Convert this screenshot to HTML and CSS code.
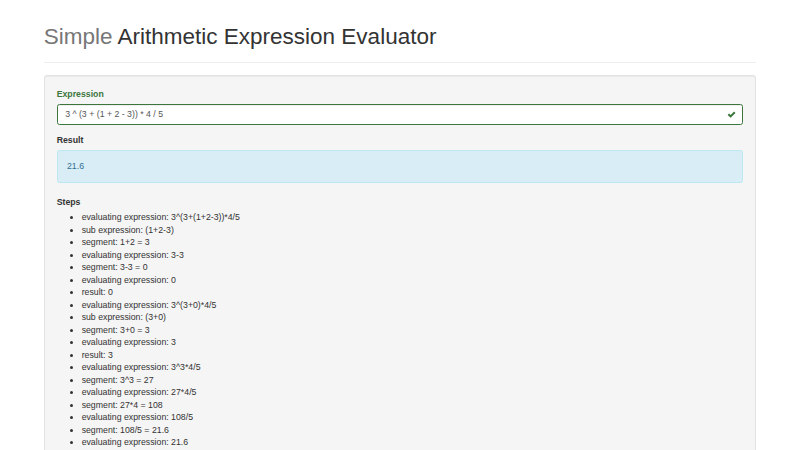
FILE: index.html
```html
<!DOCTYPE html>
<html lang="en">
<head>
    <meta charset="UTF-8">
    <meta name="viewport" content="width=device-width, initial-scale=1.0">
    <title>Simple Arithmetic Expression Evaluator</title>
    <link rel="stylesheet" href="styles.css">
</head>
<body>
    <div class="container">
        <div class="page-header">
            <h1><span class="text-muted">Simple</span> Arithmetic Expression Evaluator</h1>
        </div>

        <div class="well">
            <div class="form-group has-success">
                <label for="expression">Expression</label>
                <div class="input-wrap">
                    <input type="text" id="expression" class="form-control" value="3 ^ (3 + (1 + 2 - 3)) * 4 / 5">
                    <svg class="feedback" viewBox="0 0 14 14" width="9" height="9">
                        <path d="M1 7.6 L3.2 5.4 L5.6 7.8 L11 2.4 L13.2 4.6 L5.6 12.2 Z" fill="#3c763d"/>
                    </svg>
                </div>
            </div>

            <div class="form-group">
                <label>Result</label>
                <div class="alert alert-info">21.6</div>
            </div>

            <div class="form-group">
                <label>Steps</label>
                <ul class="steps">
                    <li>evaluating expression: 3^(3+(1+2-3))*4/5</li>
                    <li>sub expression: (1+2-3)</li>
                    <li>segment: 1+2 = 3</li>
                    <li>evaluating expression: 3-3</li>
                    <li>segment: 3-3 = 0</li>
                    <li>evaluating expression: 0</li>
                    <li>result: 0</li>
                    <li>evaluating expression: 3^(3+0)*4/5</li>
                    <li>sub expression: (3+0)</li>
                    <li>segment: 3+0 = 3</li>
                    <li>evaluating expression: 3</li>
                    <li>result: 3</li>
                    <li>evaluating expression: 3^3*4/5</li>
                    <li>segment: 3^3 = 27</li>
                    <li>evaluating expression: 27*4/5</li>
                    <li>segment: 27*4 = 108</li>
                    <li>evaluating expression: 108/5</li>
                    <li>segment: 108/5 = 21.6</li>
                    <li>evaluating expression: 21.6</li>
                </ul>
            </div>
        </div>
    </div>
</body>
</html>
```

FILE: styles.css
```css
body {
    margin: 0;
    font-family: "Liberation Sans", Arial, sans-serif;
    font-size: 8.75px;
    line-height: 12.5px;
    color: #333;
    background-color: #fff;
}
.container {
    width: 731.25px;
    margin: 0 auto;
    padding: 0 9.375px;
    box-sizing: border-box;
}
.page-header {
    margin: 25px 0 12.5px;
    padding-bottom: 5.625px;
    border-bottom: 1px solid #eee;
}
h1 {
    margin: 0 0 6.25px;
    font-size: 22.5px;
    font-weight: 500;
    line-height: 24.75px;
}
.text-muted {
    color: #777;
}
.well {
    padding: 11.875px;
    background-color: #f5f5f5;
    border: 1px solid #e3e3e3;
    border-radius: 2.5px;
    box-shadow: inset 0 1px 1px rgba(0,0,0,0.05);
}
.form-group {
    margin-bottom: 9.375px;
}
.form-group label {
    display: block;
    margin-bottom: 3.125px;
    font-weight: bold;
}
.has-success label {
    color: #3c763d;
}
.input-wrap {
    position: relative;
}
.form-control {
    display: block;
    width: 100%;
    height: 21.25px;
    box-sizing: border-box;
    padding: 3.75px 26.5px 3.75px 7.5px;
    font-family: inherit;
    font-size: 8.75px;
    color: #555;
    background-color: #fff;
    border: 1px solid #3c763d;
    border-radius: 2.5px;
    box-shadow: inset 0 1px 1px rgba(0,0,0,0.075);
    outline: none;
}
.feedback {
    position: absolute;
    top: 6px;
    right: 7px;
}
.alert {
    margin-bottom: 12.5px;
    padding: 9.375px;
    border: 1px solid #bce8f1;
    border-radius: 2.5px;
}
.alert-info {
    color: #31708f;
    background-color: #d9edf7;
}
.steps {
    margin: 0 0 6.25px;
    padding-left: 25px;
}
```
